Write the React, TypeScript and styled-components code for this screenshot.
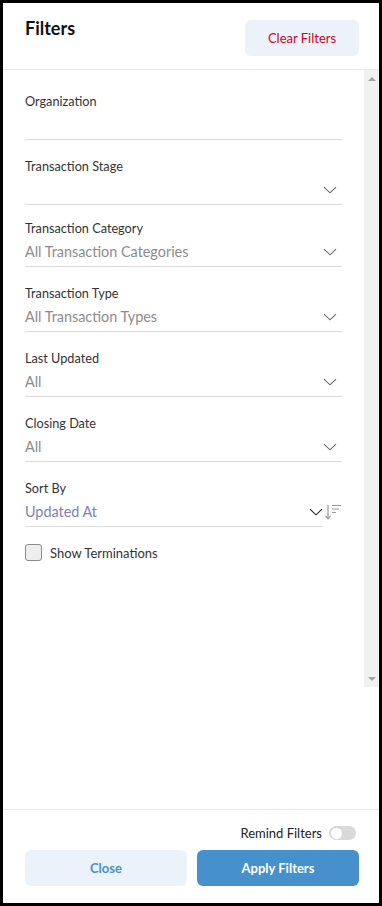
import React, { useState } from "react";
import styled, { createGlobalStyle } from "styled-components";

const GlobalStyle = createGlobalStyle`
  html, body {
    margin: 0;
    padding: 0;
    background: #fff;
  }
  * {
    box-sizing: border-box;
  }
`;

const Panel = styled.div`
  width: 382px;
  height: 906px;
  border: 3px solid #000;
  background: #fff;
  display: flex;
  flex-direction: column;
  font-family: Lato, "Open Sans", sans-serif;
  color: #333;
`;

const Header = styled.div`
  height: 67px;
  flex: none;
  display: flex;
  align-items: flex-start;
  justify-content: space-between;
  padding: 14px 20px 0 22px;
  border-bottom: 1px solid #e8e8e8;
`;

const Title = styled.h1`
  margin: 0;
  font-size: 18px;
  line-height: 22px;
  font-weight: 700;
  color: #111;
`;

const Button = styled.button<{ $variant: "soft" | "danger" | "primary" }>`
  height: 36px;
  border: none;
  border-radius: 6px;
  font-family: inherit;
  font-size: 13px;
  cursor: pointer;
  background: ${(p) => (p.$variant === "primary" ? "#4690cb" : "#ebf2f9")};
  color: ${(p) =>
    p.$variant === "primary" ? "#fff" : p.$variant === "danger" ? "#d0021b" : "#4a8fc9"};
  font-weight: ${(p) => (p.$variant === "danger" ? 400 : 700)};
`;

const ClearButton = styled(Button)`
  width: 114px;
  margin-top: 3px;
`;

const Body = styled.div`
  flex: 1;
`;

const ScrollBox = styled.div`
  height: 617px;
  display: flex;
`;

const Content = styled.div`
  flex: 1;
  padding: 23px 22px 0 22px;
  display: flex;
  flex-direction: column;
  gap: 18px;
`;

const Track = styled.div`
  width: 15px;
  flex: none;
  background: #f1f1f1;
  display: flex;
  flex-direction: column;
  justify-content: space-between;
  align-items: center;
  padding: 7px 0 6px;
`;

const Arrow = styled.div<{ $down?: boolean }>`
  width: 0;
  height: 0;
  border-left: 4px solid transparent;
  border-right: 4px solid transparent;
  ${(p) =>
    p.$down ? "border-top: 4px solid #a3a3a3;" : "border-bottom: 4px solid #a3a3a3;"}
`;

const Field = styled.div<{ $tight?: boolean }>`
  display: flex;
  flex-direction: column;
  margin-bottom: ${(p) => (p.$tight ? "-3px" : "0")};
`;

const Label = styled.div`
  font-size: 12.7px;
  line-height: 16px;
  color: #333;
`;

const SelectRow = styled.div`
  margin-top: 6px;
  display: flex;
  align-items: center;
`;

const Select = styled.div`
  flex: 1;
  height: 25px;
  padding-bottom: 5px;
  border-bottom: 1px solid #dcdcdc;
  display: flex;
  align-items: center;
  justify-content: space-between;
`;

const Value = styled.span<{ $accent?: boolean }>`
  font-size: 14.4px;
  line-height: 20px;
  color: ${(p) => (p.$accent ? "#7f7fb6" : "#8c8c8c")};
`;

const ChevronBox = styled.span<{ $flush?: boolean }>`
  display: flex;
  width: 14px;
  margin-right: ${(p) => (p.$flush ? "0" : "5px")};
`;

const SortIcon = styled.span`
  display: flex;
  margin-top: -5px;
  margin-left: 1px;
`;

const CheckRow = styled.label`
  display: flex;
  align-items: center;
  gap: 8px;
  font-size: 13px;
  color: #333;
  margin-top: -1px;
`;

const CheckBox = styled.span`
  width: 17px;
  height: 17px;
  border: 1px solid #8a8a8a;
  border-radius: 3px;
  background: #eeeeee;
`;

const Footer = styled.div`
  flex: none;
  border-top: 1px solid #e8e8e8;
  padding: 14px 20px 17px 22px;
  display: flex;
  flex-direction: column;
  gap: 8px;
`;

const RemindRow = styled.div`
  height: 18px;
  display: flex;
  justify-content: flex-end;
  align-items: center;
  gap: 7px;
  padding-right: 3px;
  font-size: 13px;
  color: #222;
`;

const Toggle = styled.span`
  width: 27px;
  height: 14px;
  border-radius: 7px;
  background: #d9d9d9;
  display: flex;
  align-items: center;
  padding: 0 2px;
`;

const Knob = styled.span`
  width: 11px;
  height: 11px;
  border-radius: 50%;
  background: #fff;
`;

const ButtonRow = styled.div`
  display: grid;
  grid-template-columns: 1fr 1fr;
  gap: 10px;
`;

function Chevron({ color = "#6a6a6a", flush }: { color?: string; flush?: boolean }) {
  return (
    <ChevronBox $flush={flush}>
      <svg width="14" height="8" viewBox="0 0 14 8">
        <path d="M1 1.2 L7 6.8 L13 1.2" fill="none" stroke={color} strokeWidth="1.1" />
      </svg>
    </ChevronBox>
  );
}

type FilterDef = { label: string; value?: string; select?: boolean; tight?: boolean };

const filters: FilterDef[] = [
  { label: "Organization" },
  { label: "Transaction Stage", value: "", select: true, tight: true },
  { label: "Transaction Category", value: "All Transaction Categories", select: true },
  { label: "Transaction Type", value: "All Transaction Types", select: true },
  { label: "Last Updated", value: "All", select: true },
  { label: "Closing Date", value: "All", select: true },
];

export default function App() {
  const [terminations] = useState(false);

  return (
    <>
      <GlobalStyle />
      <Panel>
        <Header>
          <Title>Filters</Title>
          <ClearButton $variant="danger">Clear Filters</ClearButton>
        </Header>
        <Body>
          <ScrollBox>
            <Content>
              {filters.map((f) => (
                <Field key={f.label} $tight={f.tight}>
                  <Label>{f.label}</Label>
                  <SelectRow>
                    <Select>
                      <Value>{f.value}</Value>
                      {f.select && <Chevron />}
                    </Select>
                  </SelectRow>
                </Field>
              ))}
              <Field>
                <Label>Sort By</Label>
                <SelectRow>
                  <Select>
                    <Value $accent>Updated At</Value>
                    <Chevron color="#222" flush />
                  </Select>
                  <SortIcon>
                    <svg width="18" height="18" viewBox="0 0 18 18">
                      <path d="M4 2 V15.5" stroke="#9a9a9a" strokeWidth="1.2" />
                      <path d="M1.5 12.8 L4 15.8 L6.5 12.8" fill="none" stroke="#9a9a9a" strokeWidth="1.2" />
                      <path d="M8 2.5 H17 M8 6 H15 M8 9.5 H12" stroke="#9a9a9a" strokeWidth="1.2" />
                    </svg>
                  </SortIcon>
                </SelectRow>
              </Field>
              <CheckRow>
                <CheckBox aria-checked={terminations} />
                Show Terminations
              </CheckRow>
            </Content>
            <Track>
              <Arrow />
              <Arrow $down />
            </Track>
          </ScrollBox>
        </Body>
        <Footer>
          <RemindRow>
            Remind Filters
            <Toggle>
              <Knob />
            </Toggle>
          </RemindRow>
          <ButtonRow>
            <Button $variant="soft">Close</Button>
            <Button $variant="primary">Apply Filters</Button>
          </ButtonRow>
        </Footer>
      </Panel>
    </>
  );
}
